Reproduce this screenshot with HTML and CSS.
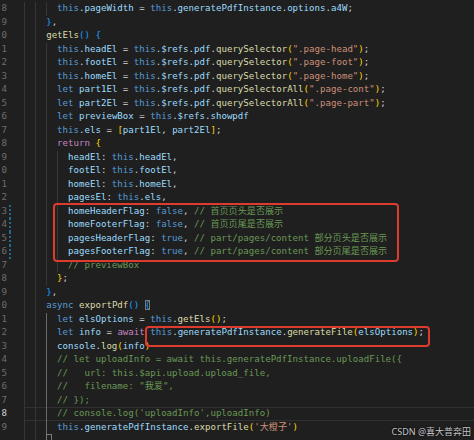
FILE: index.html
```html
<!DOCTYPE html>
<html lang="zh-CN">
<head>
    <meta charset="UTF-8">
    <title>exportPdf</title>
    <link rel="stylesheet" href="styles.css">
</head>
<body>
    <div class="editor">
        <div class="row"><span class="gut"><span class="ln">8</span><span class="dirty"></span></span><span class="code"><i class="g"></i><i class="g"></i><i class="g"></i><span class="k">this</span>.<span class="p">pageWidth</span> = <span class="k">this</span>.<span class="p">generatePdfInstance</span>.<span class="p">options</span>.<span class="p">a4W</span>;</span></div>
        <div class="row"><span class="gut"><span class="ln">9</span><span class="dirty"></span></span><span class="code"><i class="g"></i><i class="g"></i><span class="b3">}</span>,</span></div>
        <div class="row"><span class="gut"><span class="ln">0</span><span class="dirty"></span></span><span class="code"><i class="g"></i><i class="g"></i><span class="f">getEls</span><span class="b3">()</span> <span class="b3">{</span></span></div>
        <div class="row"><span class="gut"><span class="ln">1</span><span class="dirty"></span></span><span class="code"><i class="g"></i><i class="g"></i><i class="g"></i><span class="k">this</span>.<span class="p">headEl</span> = <span class="k">this</span>.<span class="p">$refs</span>.<span class="p">pdf</span>.<span class="f">querySelector</span><span class="b1">(</span><span class="s">".page-head"</span><span class="b1">)</span>;</span></div>
        <div class="row"><span class="gut"><span class="ln">2</span><span class="dirty"></span></span><span class="code"><i class="g"></i><i class="g"></i><i class="g"></i><span class="k">this</span>.<span class="p">footEl</span> = <span class="k">this</span>.<span class="p">$refs</span>.<span class="p">pdf</span>.<span class="f">querySelector</span><span class="b1">(</span><span class="s">".page-foot"</span><span class="b1">)</span>;</span></div>
        <div class="row"><span class="gut"><span class="ln">3</span><span class="dirty"></span></span><span class="code"><i class="g"></i><i class="g"></i><i class="g"></i><span class="k">this</span>.<span class="p">homeEl</span> = <span class="k">this</span>.<span class="p">$refs</span>.<span class="p">pdf</span>.<span class="f">querySelector</span><span class="b1">(</span><span class="s">".page-home"</span><span class="b1">)</span>;</span></div>
        <div class="row"><span class="gut"><span class="ln">4</span><span class="dirty"></span></span><span class="code"><i class="g"></i><i class="g"></i><i class="g"></i><span class="k">let</span> <span class="p">part1El</span> = <span class="k">this</span>.<span class="p">$refs</span>.<span class="p">pdf</span>.<span class="f">querySelectorAll</span><span class="b1">(</span><span class="s">".page-cont"</span><span class="b1">)</span>;</span></div>
        <div class="row"><span class="gut"><span class="ln">5</span><span class="dirty"></span></span><span class="code"><i class="g"></i><i class="g"></i><i class="g"></i><span class="k">let</span> <span class="p">part2El</span> = <span class="k">this</span>.<span class="p">$refs</span>.<span class="p">pdf</span>.<span class="f">querySelectorAll</span><span class="b1">(</span><span class="s">".page-part"</span><span class="b1">)</span>;</span></div>
        <div class="row"><span class="gut"><span class="ln">6</span><span class="dirty"></span></span><span class="code"><i class="g"></i><i class="g"></i><i class="g"></i><span class="k">let</span> <span class="p">previewBox</span> = <span class="k">this</span>.<span class="p">$refs</span>.<span class="p">showpdf</span></span></div>
        <div class="row"><span class="gut"><span class="ln">7</span><span class="dirty"></span></span><span class="code"><i class="g"></i><i class="g"></i><i class="g"></i><span class="k">this</span>.<span class="p">els</span> = <span class="b1">[</span><span class="p">part1El</span>, <span class="p">part2El</span><span class="b1">]</span>;</span></div>
        <div class="row"><span class="gut"><span class="ln">8</span><span class="dirty"></span></span><span class="code"><i class="g"></i><i class="g"></i><i class="g"></i><span class="c">return</span> <span class="b1">{</span></span></div>
        <div class="row"><span class="gut"><span class="ln">9</span><span class="dirty"></span></span><span class="code"><i class="g"></i><i class="g"></i><i class="g"></i><i class="g"></i><span class="p">headEl</span>: <span class="k">this</span>.<span class="p">headEl</span>,</span></div>
        <div class="row"><span class="gut"><span class="ln">0</span><span class="dirty"></span></span><span class="code"><i class="g"></i><i class="g"></i><i class="g"></i><i class="g"></i><span class="p">footEl</span>: <span class="k">this</span>.<span class="p">footEl</span>,</span></div>
        <div class="row"><span class="gut"><span class="ln">1</span><span class="dirty"></span></span><span class="code"><i class="g"></i><i class="g"></i><i class="g"></i><i class="g"></i><span class="p">homeEl</span>: <span class="k">this</span>.<span class="p">homeEl</span>,</span></div>
        <div class="row"><span class="gut"><span class="ln">2</span><span class="dirty"></span></span><span class="code"><i class="g"></i><i class="g"></i><i class="g"></i><i class="g"></i><span class="p">pagesEl</span>: <span class="k">this</span>.<span class="p">els</span>,</span></div>
        <div class="row"><span class="gut"><span class="ln">3</span><span class="dirty on"></span></span><span class="code"><i class="g"></i><i class="g"></i><i class="g"></i><i class="g"></i><span class="p">homeHeaderFlag</span>: <span class="k">false</span>, <span class="m">// 首页页头是否展示</span></span></div>
        <div class="row"><span class="gut"><span class="ln">4</span><span class="dirty on"></span></span><span class="code"><i class="g"></i><i class="g"></i><i class="g"></i><i class="g"></i><span class="p">homeFooterFlag</span>: <span class="k">false</span>, <span class="m">// 首页页尾是否展示</span></span></div>
        <div class="row"><span class="gut"><span class="ln">5</span><span class="dirty on"></span></span><span class="code"><i class="g"></i><i class="g"></i><i class="g"></i><i class="g"></i><span class="p">pagesHeaderFlag</span>: <span class="k">true</span>, <span class="m">// part/pages/content 部分页头是否展示</span></span></div>
        <div class="row"><span class="gut"><span class="ln">6</span><span class="dirty on"></span></span><span class="code"><i class="g"></i><i class="g"></i><i class="g"></i><i class="g"></i><span class="p">pagesFooterFlag</span>: <span class="k">true</span>, <span class="m">// part/pages/content 部分页尾是否展示</span></span></div>
        <div class="row"><span class="gut"><span class="ln">7</span><span class="dirty"></span></span><span class="code"><i class="g"></i><i class="g"></i><i class="g"></i><i class="g"></i><span class="m">// previewBox</span></span></div>
        <div class="row"><span class="gut"><span class="ln">8</span><span class="dirty"></span></span><span class="code"><i class="g"></i><i class="g"></i><i class="g"></i><span class="b1">}</span>;</span></div>
        <div class="row"><span class="gut"><span class="ln">9</span><span class="dirty"></span></span><span class="code"><i class="g"></i><i class="g"></i><span class="b3">}</span>,</span></div>
        <div class="row"><span class="gut"><span class="ln">0</span><span class="dirty"></span></span><span class="code"><i class="g"></i><i class="g"></i><span class="k">async</span> <span class="f">exportPdf</span><span class="b3">()</span> <span class="b3 match">{</span></span></div>
        <div class="row"><span class="gut"><span class="ln">1</span><span class="dirty"></span></span><span class="code"><i class="g"></i><i class="g"></i><i class="g on"></i><span class="k">let</span> <span class="p">elsOptions</span> = <span class="k">this</span>.<span class="f">getEls</span><span class="b1">()</span>;</span></div>
        <div class="row"><span class="gut"><span class="ln">2</span><span class="dirty"></span></span><span class="code"><i class="g"></i><i class="g"></i><i class="g on"></i><span class="k">let</span> <span class="p">info</span> = <span class="c">await</span> <span class="k">this</span>.<span class="p">generatePdfInstance</span>.<span class="f">generateFile</span><span class="b1">(</span><span class="p">elsOptions</span><span class="b1">)</span>;</span></div>
        <div class="row"><span class="gut"><span class="ln">3</span><span class="dirty"></span></span><span class="code"><i class="g"></i><i class="g"></i><i class="g on"></i><span class="p">console</span>.<span class="f">log</span><span class="b1">(</span><span class="p">info</span><span class="b1">)</span></span></div>
        <div class="row"><span class="gut"><span class="ln">4</span><span class="dirty"></span></span><span class="code"><i class="g"></i><i class="g"></i><i class="g on"></i><span class="m">// let uploadInfo = await this.generatePdfInstance.uploadFile({</span></span></div>
        <div class="row"><span class="gut"><span class="ln">5</span><span class="dirty"></span></span><span class="code"><i class="g"></i><i class="g"></i><i class="g on"></i><span class="m">//   url: this.$api.upload.upload_file,</span></span></div>
        <div class="row"><span class="gut"><span class="ln">6</span><span class="dirty"></span></span><span class="code"><i class="g"></i><i class="g"></i><i class="g on"></i><span class="m">//   filename: "我爱",</span></span></div>
        <div class="row"><span class="gut"><span class="ln">7</span><span class="dirty"></span></span><span class="code"><i class="g"></i><i class="g"></i><i class="g on"></i><span class="m">// });</span></span></div>
        <div class="row cur"><span class="gut"><span class="ln">8</span><span class="dirty"></span></span><span class="code"><i class="g"></i><i class="g"></i><i class="g on"></i><span class="m">// console.log('uploadInfo',uploadInfo)</span></span></div>
        <div class="row"><span class="gut"><span class="ln">9</span><span class="dirty"></span></span><span class="code"><i class="g"></i><i class="g"></i><i class="g on"></i><span class="k">this</span>.<span class="p">generatePdfInstance</span>.<span class="f">exportFile</span><span class="b1">(</span><span class="s">'大橙子'</span><span class="b1">)</span></span></div>
        <div class="row"><span class="gut"><span class="ln"></span><span class="dirty"></span></span><span class="code"><i class="g"></i><i class="g"></i><span class="match pair"></span></span></div>

        <div class="mark mark-flags"></div>
        <div class="mark mark-call"></div>
        <div class="watermark">CSDN @喜大普奔田</div>
    </div>
</body>
</html>
```

FILE: styles.css
```css
body {
    margin: 0;
    padding: 0;
    background-color: #1f1f1f;
    overflow: hidden;
}

.editor {
    position: relative;
    width: 474px;
    height: 440px;
    padding-top: 2px;
    box-sizing: border-box;
    overflow: hidden;
    background-color: #1f1f1f;
    color: #d4d4d4;
    font-family: 'DejaVu Sans Mono', 'Noto Sans CJK SC', monospace;
    font-size: 9.1px;
}

.row {
    display: flex;
    height: 13.5px;
    line-height: 13.5px;
    white-space: pre;
}

.gut {
    display: flex;
    flex: 0 0 24.3px;
}

.ln {
    width: 7px;
    text-align: right;
    color: #6e6e6e;
}

.cur .ln {
    color: #d0d0d0;
}

.dirty {
    width: 2px;
    margin-left: 2px;
}

.dirty.on {
    background: repeating-linear-gradient(to bottom, #1b6e8f 0 2px, transparent 2px 4px);
}

.code {
    flex: 1;
}

.cur .code {
    box-shadow: inset 0 1px #303030, inset 0 -1px #303030;
}

/* indent guides */
.g {
    display: inline-block;
    width: 2ch;
    height: 13.5px;
    vertical-align: top;
    box-sizing: border-box;
    border-left: 1px solid #363636;
}

.g.on {
    border-left-color: #6a6a6a;
}

.k { color: #569cd6; }
.c { color: #c586c0; }
.p { color: #9cdcfe; }
.f { color: #dcdcaa; }
.s { color: #ce9178; }
.m { color: #6a9955; }
.b1 { color: #ffd700; }
.b3 { color: #179fff; }

.match {
    outline: 1px solid #7a7a7a;
    outline-offset: -1px;
}

.pair {
    display: inline-block;
    width: 1ch;
    height: 13.5px;
    vertical-align: top;
}

/* red highlight boxes drawn over the code */
.mark {
    position: absolute;
    box-sizing: border-box;
    border: 2px solid #dc3b2e;
    border-radius: 4px;
}

.mark-flags {
    left: 53px;
    top: 203px;
    width: 346px;
    height: 59px;
}

.mark-call {
    left: 145px;
    top: 326px;
    width: 285px;
    height: 21px;
}

.watermark {
    position: absolute;
    right: 3px;
    bottom: 2px;
    font-family: 'Noto Sans', 'Noto Sans CJK SC', sans-serif;
    font-size: 9px;
    line-height: 12px;
    color: #c4c4c4;
    text-shadow: 0 0 2px #000;
}
```
